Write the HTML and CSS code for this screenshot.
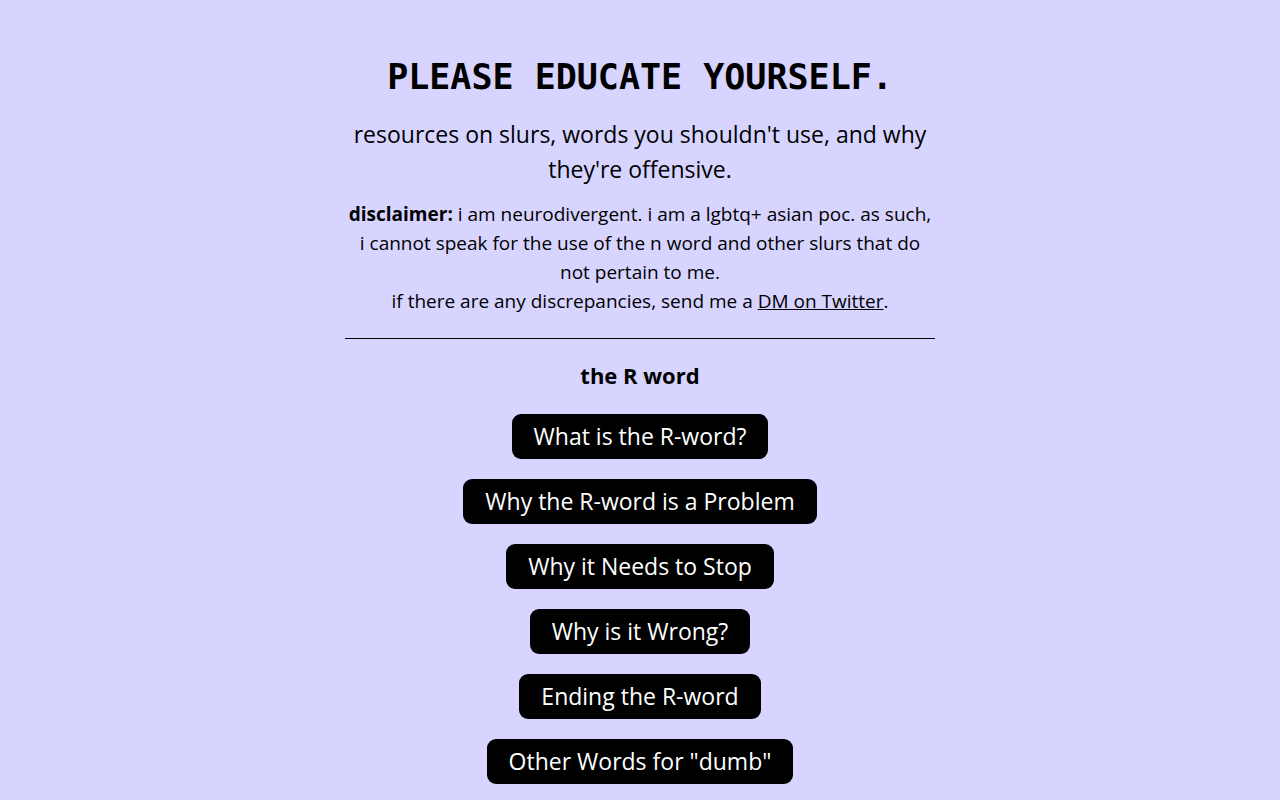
FILE: index.html
```html
<!DOCTYPE html>
<html lang="en">
<head>
<meta charset="utf-8">
<title>Please Educate Yourself.</title>
<link rel="stylesheet" href="styles.css">
</head>
<body>
<main class="page">
  <h1 class="title">PLEASE EDUCATE YOURSELF.</h1>
  <p class="subtitle">resources on slurs, words you shouldn't use, and why they're offensive.</p>
  <p class="disclaimer"><strong>disclaimer:</strong> i am neurodivergent. i am a lgbtq+ asian poc. as such, i cannot speak for the use of the n word and other slurs that do not pertain to me.<br>if there are any discrepancies, send me a <a href="#">DM on Twitter</a>.</p>
  <hr class="rule">
  <section class="group">
    <h2 class="group-title">the R word</h2>
    <nav class="links">
      <a class="btn" href="#">What is the R-word?</a>
      <a class="btn" href="#">Why the R-word is a Problem</a>
      <a class="btn" href="#">Why it Needs to Stop</a>
      <a class="btn" href="#">Why is it Wrong?</a>
      <a class="btn" href="#">Ending the R-word</a>
      <a class="btn" href="#">Other Words for "dumb"</a>
    </nav>
  </section>
</main>
</body>
</html>
```

FILE: styles.css
```css
html, body {
  margin: 0;
  padding: 0;
  background: #d7d4ff;
}
body {
  font-family: "Open Sans", "Noto Sans", sans-serif;
  color: #000;
}
.page {
  width: 590px;
  margin: 0 auto;
  padding-top: 56px;
  text-align: center;
}
.title {
  font-family: "DejaVu Sans Mono", "Liberation Mono", monospace;
  font-weight: 700;
  font-size: 35px;
  line-height: 42px;
  margin: 0;
}
.subtitle {
  font-size: 23px;
  line-height: 35px;
  margin: 19px 0 0;
}
.disclaimer {
  font-size: 19px;
  line-height: 29px;
  margin: 13px 0 0;
}
.disclaimer a {
  color: #000;
}
.rule {
  border: 0;
  border-top: 1px solid #000;
  margin: 22px 0 0;
}
.group-title {
  font-size: 22px;
  line-height: 30px;
  font-weight: 700;
  margin: 21px 0 0;
}
.links {
  display: flex;
  flex-direction: column;
  align-items: center;
  gap: 20px;
  margin-top: 24px;
}
.btn {
  display: block;
  background: #000;
  color: #fff;
  text-decoration: none;
  font-size: 23px;
  line-height: 29px;
  padding: 8px 22px;
  border-radius: 9px;
}
```
